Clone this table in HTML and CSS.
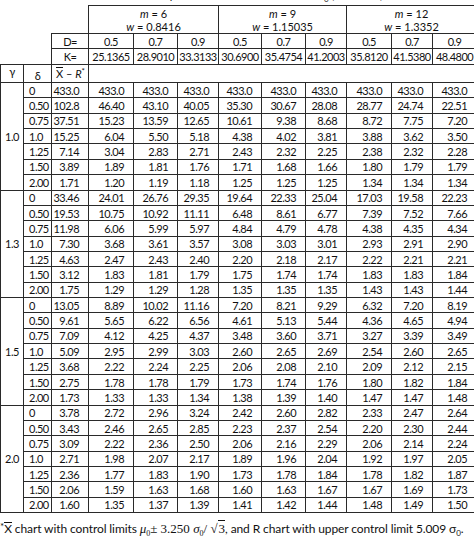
FILE: index.html
```html
<!DOCTYPE html>
<html>
<head>
<meta charset="utf-8">
<link rel="stylesheet" href="styles.css">
</head>
<body>
<div class="page">
<div class="caption"><div class="cap-text">Values of the optimal combined chart with ARL<sub>0</sub> (in control)</div></div>
<table class="arl">
<colgroup>
<col class="w23"><col class="w28"><col class="w37">
<col class="w45"><col class="w44"><col class="w41">
<col class="w43"><col class="w44"><col class="w41">
<col class="w45"><col class="w41"><col class="w44">
</colgroup>
<tr class="r-m"><td colspan="3" class="blank"></td>
<td colspan="3" class="mh"><i>m</i> = 6<br><i>w</i> = 0.8416</td>
<td colspan="3" class="mh"><i>m</i> = 9<br><i>w</i> = 1.15035</td>
<td colspan="3" class="mh"><i>m</i> = 12<br><i>w</i> = 1.3352</td></tr>
<tr class="r-d"><td colspan="2" class="blank"></td><td class="lab">D=</td>
<td>0.5</td><td>0.7</td><td>0.9</td><td>0.5</td><td>0.7</td><td>0.9</td><td>0.5</td><td>0.7</td><td>0.9</td></tr>
<tr class="r-k"><td colspan="2" class="blank"></td><td class="lab">K=</td>
<td>25.1365</td><td>28.9010</td><td>33.3133</td><td>30.6900</td><td>35.4754</td><td>41.2003</td><td>35.8120</td><td>41.5380</td><td>48.4800</td></tr>
<tr class="r-h"><td class="gh">&gamma;</td><td class="dh">&delta;</td><td class="xh"><span class="ov">X</span> &ndash; <i>R</i><sup>*</sup></td><td colspan="9" class="open"></td></tr>

<tr class="dr"><td class="g" rowspan="7">1.0</td><td class="dl">0</td><td class="xr">433.0</td><td>433.0</td><td>433.0</td><td>433.0</td><td>433.0</td><td>433.0</td><td>433.0</td><td>433.0</td><td>433.0</td><td>433.0</td></tr>
<tr class="dr"><td class="dl">0.50</td><td class="xr">102.8</td><td>46.40</td><td>43.10</td><td>40.05</td><td>35.30</td><td>30.67</td><td>28.08</td><td>28.77</td><td>24.74</td><td>22.51</td></tr>
<tr class="dr"><td class="dl">0.75</td><td class="xr">37.51</td><td>15.23</td><td>13.59</td><td>12.65</td><td>10.61</td><td>9.38</td><td>8.68</td><td>8.72</td><td>7.75</td><td>7.20</td></tr>
<tr class="dr"><td class="dl">1.0</td><td class="xr">15.25</td><td>6.04</td><td>5.50</td><td>5.18</td><td>4.38</td><td>4.02</td><td>3.81</td><td>3.88</td><td>3.62</td><td>3.50</td></tr>
<tr class="dr"><td class="dl">1.25</td><td class="xr">7.14</td><td>3.04</td><td>2.83</td><td>2.71</td><td>2.43</td><td>2.32</td><td>2.25</td><td>2.38</td><td>2.32</td><td>2.28</td></tr>
<tr class="dr"><td class="dl">1.50</td><td class="xr">3.89</td><td>1.89</td><td>1.81</td><td>1.76</td><td>1.71</td><td>1.68</td><td>1.66</td><td>1.80</td><td>1.79</td><td>1.79</td></tr>
<tr class="dr"><td class="dl">2.00</td><td class="xr">1.71</td><td>1.20</td><td>1.19</td><td>1.18</td><td>1.25</td><td>1.25</td><td>1.25</td><td>1.34</td><td>1.34</td><td>1.34</td></tr>

<tr class="dr"><td class="g" rowspan="7">1.3</td><td class="dl">0</td><td class="xr">33.46</td><td>24.01</td><td>26.76</td><td>29.35</td><td>19.64</td><td>22.33</td><td>25.04</td><td>17.03</td><td>19.58</td><td>22.23</td></tr>
<tr class="dr"><td class="dl">0.50</td><td class="xr">19.53</td><td>10.75</td><td>10.92</td><td>11.11</td><td>6.48</td><td>8.61</td><td>6.77</td><td>7.39</td><td>7.52</td><td>7.66</td></tr>
<tr class="dr"><td class="dl">0.75</td><td class="xr">11.98</td><td>6.06</td><td>5.99</td><td>5.97</td><td>4.84</td><td>4.79</td><td>4.78</td><td>4.38</td><td>4.35</td><td>4.34</td></tr>
<tr class="dr"><td class="dl">1.0</td><td class="xr">7.30</td><td>3.68</td><td>3.61</td><td>3.57</td><td>3.08</td><td>3.03</td><td>3.01</td><td>2.93</td><td>2.91</td><td>2.90</td></tr>
<tr class="dr"><td class="dl">1.25</td><td class="xr">4.63</td><td>2.47</td><td>2.43</td><td>2.40</td><td>2.20</td><td>2.18</td><td>2.17</td><td>2.22</td><td>2.21</td><td>2.21</td></tr>
<tr class="dr"><td class="dl">1.50</td><td class="xr">3.12</td><td>1.83</td><td>1.81</td><td>1.79</td><td>1.75</td><td>1.74</td><td>1.74</td><td>1.83</td><td>1.83</td><td>1.84</td></tr>
<tr class="dr"><td class="dl">2.00</td><td class="xr">1.75</td><td>1.29</td><td>1.29</td><td>1.28</td><td>1.35</td><td>1.35</td><td>1.35</td><td>1.43</td><td>1.43</td><td>1.44</td></tr>

<tr class="dr"><td class="g" rowspan="7">1.5</td><td class="dl">0</td><td class="xr">13.05</td><td>8.89</td><td>10.02</td><td>11.16</td><td>7.20</td><td>8.21</td><td>9.29</td><td>6.32</td><td>7.20</td><td>8.19</td></tr>
<tr class="dr"><td class="dl">0.50</td><td class="xr">9.61</td><td>5.65</td><td>6.22</td><td>6.56</td><td>4.61</td><td>5.13</td><td>5.44</td><td>4.36</td><td>4.65</td><td>4.94</td></tr>
<tr class="dr"><td class="dl">0.75</td><td class="xr">7.09</td><td>4.12</td><td>4.25</td><td>4.37</td><td>3.48</td><td>3.60</td><td>3.71</td><td>3.27</td><td>3.39</td><td>3.49</td></tr>
<tr class="dr"><td class="dl">1.0</td><td class="xr">5.09</td><td>2.95</td><td>2.99</td><td>3.03</td><td>2.60</td><td>2.65</td><td>2.69</td><td>2.54</td><td>2.60</td><td>2.65</td></tr>
<tr class="dr"><td class="dl">1.25</td><td class="xr">3.68</td><td>2.22</td><td>2.24</td><td>2.25</td><td>2.06</td><td>2.08</td><td>2.10</td><td>2.09</td><td>2.12</td><td>2.15</td></tr>
<tr class="dr"><td class="dl">1.50</td><td class="xr">2.75</td><td>1.78</td><td>1.78</td><td>1.79</td><td>1.73</td><td>1.74</td><td>1.76</td><td>1.80</td><td>1.82</td><td>1.84</td></tr>
<tr class="dr"><td class="dl">2.00</td><td class="xr">1.73</td><td>1.33</td><td>1.33</td><td>1.34</td><td>1.38</td><td>1.39</td><td>1.40</td><td>1.47</td><td>1.47</td><td>1.48</td></tr>

<tr class="dr"><td class="g" rowspan="7">2.0</td><td class="dl">0</td><td class="xr">3.78</td><td>2.72</td><td>2.96</td><td>3.24</td><td>2.42</td><td>2.60</td><td>2.82</td><td>2.33</td><td>2.47</td><td>2.64</td></tr>
<tr class="dr"><td class="dl">0.50</td><td class="xr">3.43</td><td>2.46</td><td>2.65</td><td>2.85</td><td>2.23</td><td>2.37</td><td>2.54</td><td>2.20</td><td>2.30</td><td>2.44</td></tr>
<tr class="dr"><td class="dl">0.75</td><td class="xr">3.09</td><td>2.22</td><td>2.36</td><td>2.50</td><td>2.06</td><td>2.16</td><td>2.29</td><td>2.06</td><td>2.14</td><td>2.24</td></tr>
<tr class="dr"><td class="dl">1.0</td><td class="xr">2.71</td><td>1.98</td><td>2.07</td><td>2.17</td><td>1.89</td><td>1.96</td><td>2.04</td><td>1.92</td><td>1.97</td><td>2.05</td></tr>
<tr class="dr"><td class="dl">1.25</td><td class="xr">2.36</td><td>1.77</td><td>1.83</td><td>1.90</td><td>1.73</td><td>1.78</td><td>1.84</td><td>1.78</td><td>1.82</td><td>1.87</td></tr>
<tr class="dr"><td class="dl">1.50</td><td class="xr">2.06</td><td>1.59</td><td>1.63</td><td>1.68</td><td>1.60</td><td>1.63</td><td>1.67</td><td>1.67</td><td>1.69</td><td>1.73</td></tr>
<tr class="dr"><td class="dl">2.00</td><td class="xr">1.60</td><td>1.35</td><td>1.37</td><td>1.39</td><td>1.41</td><td>1.42</td><td>1.44</td><td>1.48</td><td>1.49</td><td>1.50</td></tr>
</table>
<p class="note"><sup class="ast">*</sup><span class="ov">X</span> chart with control limits <span class="math"><i>&mu;</i><sub>0</sub>&plusmn; 3.250 <i>&sigma;</i><sub>0</sub>/ &radic;<span class="rad">3</span></span>, and R chart with upper control limit 5.009 &sigma;<sub class="s0">0</sub>.</p>
</div>
</body>
</html>
```
FILE: styles.css
```css
html, body {
  margin: 0;
  padding: 0;
  overflow: hidden;
  background: #fff;
}
body {
  width: 474px;
  height: 536px;
  font-family: Lato, "Open Sans", sans-serif;
  color: #111;
}
.page {
  width: 474px;
  overflow: hidden;
}
.caption {
  height: 5px;
  overflow: hidden;
  padding-left: 98px;
}
.cap-text {
  margin-top: -12px;
  line-height: 13px;
  font-size: 11px;
  white-space: nowrap;
}
.arl {
  border-collapse: collapse;
  table-layout: fixed;
  width: 476px;
  font-size: 11px;
  letter-spacing: -0.5px;
}
.w23 { width: 23px; }
.w28 { width: 28px; }
.w37 { width: 37px; }
.w41 { width: 41px; }
.w43 { width: 43px; }
.w44 { width: 44px; }
.w45 { width: 45px; }
.arl td {
  border: 1px solid #2a2a2a;
  padding: 0;
  text-align: center;
  white-space: nowrap;
  line-height: 13px;
  overflow: hidden;
}
.arl td.blank {
  border: none;
}
.r-m td { height: 27px; }
.mh { line-height: 12px; vertical-align: middle; letter-spacing: 0; }
.r-d td { height: 14px; }
.r-k td { height: 15px; }
.r-h td { height: 17px; }
.lab { text-align: center; }
.gh { vertical-align: top; padding-top: 3px; }
.dh { vertical-align: bottom; padding-bottom: 1px; }
.arl td.xh { text-align: left; padding-left: 4px; letter-spacing: 0; }
.arl td.open { border-left: 1px solid #2a2a2a; border-right: none; }
.ov {
  display: inline-block;
  border-top: 1px solid #111;
  line-height: 10px;
  padding-top: 1px;
}
sup { font-size: 8px; vertical-align: 4px; line-height: 0; }
sub { font-size: 8px; vertical-align: -3px; line-height: 0; }
.dr td { height: 14.36px; text-align: right; padding-right: 9px; }
.dr td.g { text-align: center; padding-right: 0; }
.dr td.dl { text-align: left; padding-left: 5px; padding-right: 0; }
.dr td.xr { padding-right: 9px; }
.note {
  margin: 8px 0 0 0;
  font-size: 12px;
  letter-spacing: -0.1px;
  line-height: 15px;
  white-space: nowrap;
}
.note .ov { line-height: 10px; }
.ast { font-size: 10px; vertical-align: 3px; }
.math {
  font-family: "Liberation Serif", serif;
  font-size: 13px;
  letter-spacing: 0;
}
.math sub { font-size: 8px; }
.rad {
  border-top: 1px solid #111;
  padding-left: 1px;
}
```
